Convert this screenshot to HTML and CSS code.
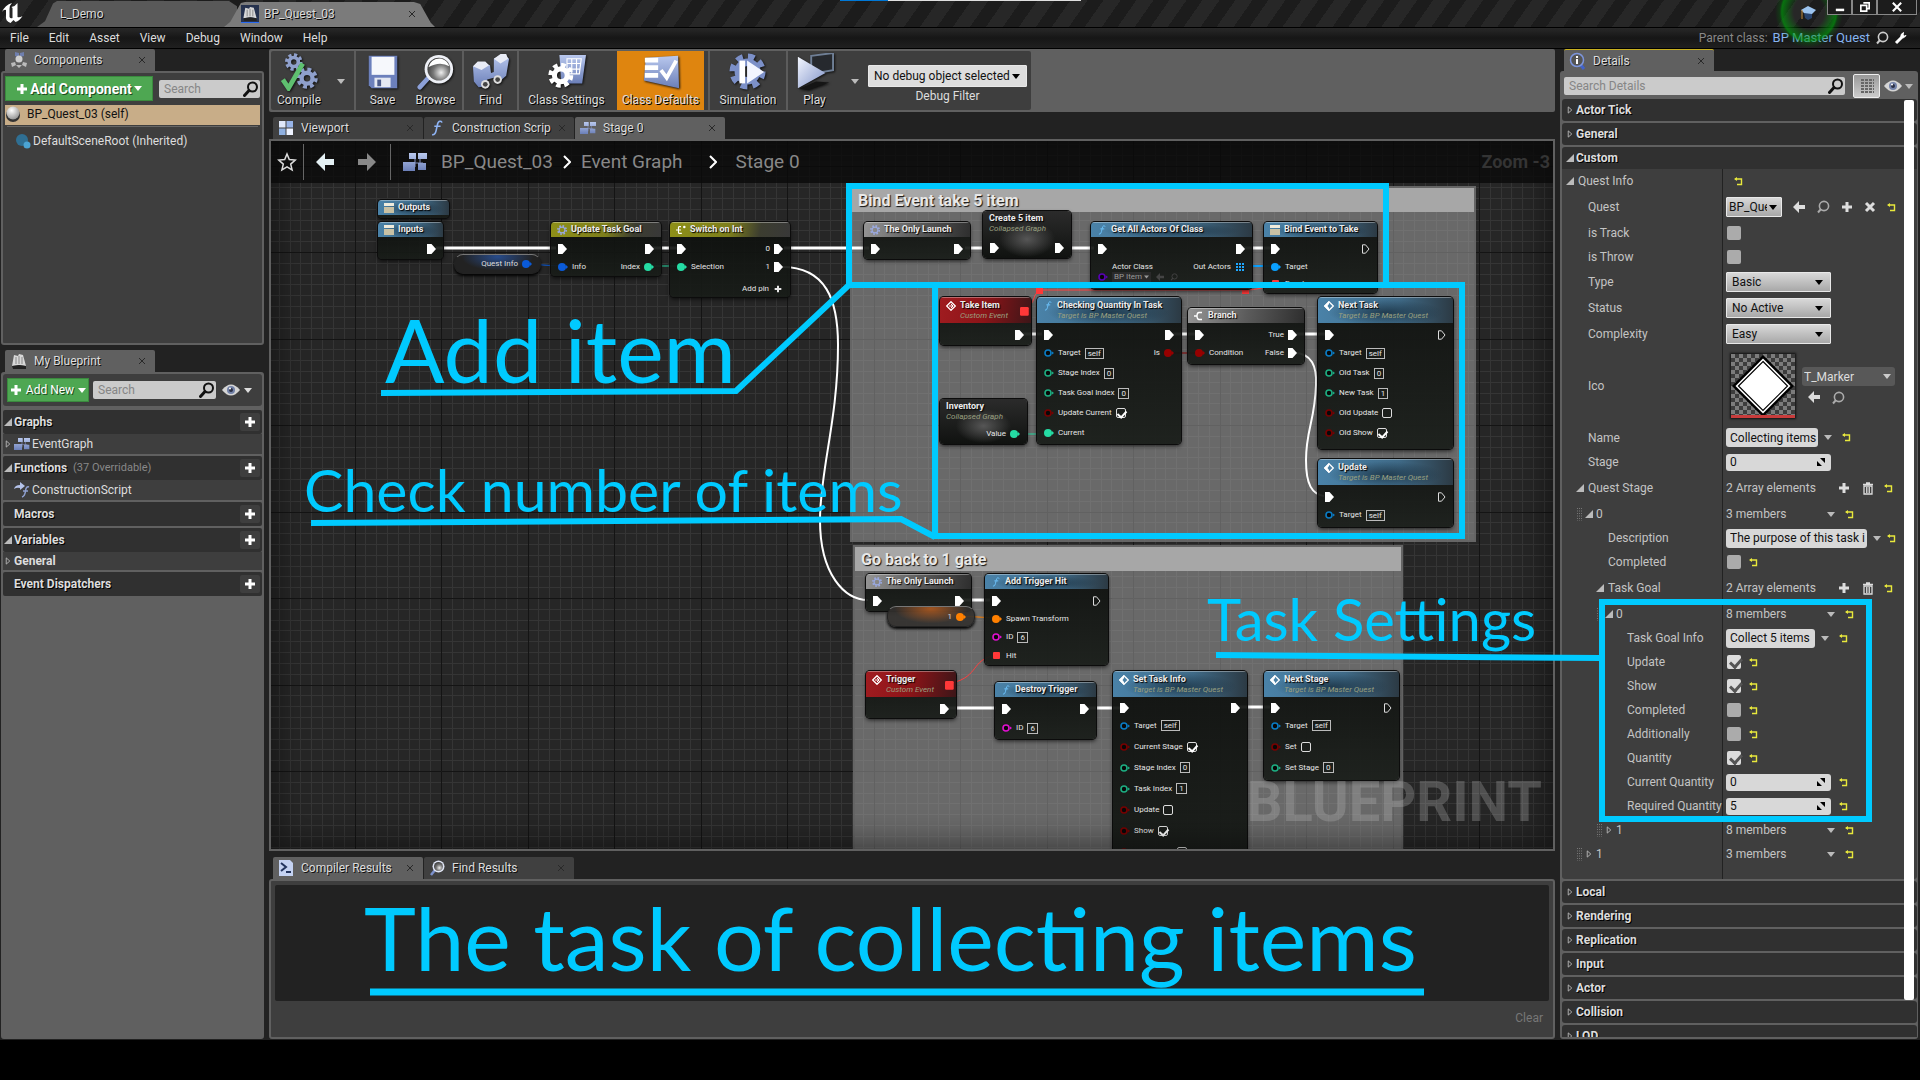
FILE: index.html
```html
<!DOCTYPE html>
<html lang="en">
<head>
<meta charset="utf-8">
<title>BP_Quest_03</title>
<link rel="stylesheet" href="styles.css">
</head>
<body>
<svg class="sprite" aria-hidden="true">
  <defs>
    <linearGradient id="steel" x1="0" y1="0" x2="1" y2="1"><stop offset="0" stop-color="#f4f7ff"/><stop offset="1" stop-color="#7f92c8"/></linearGradient>
    <linearGradient id="blueg" x1="0" y1="0" x2="0" y2="1"><stop offset="0" stop-color="#b9c8ee"/><stop offset="1" stop-color="#6b7fb8"/></linearGradient>
    <radialGradient id="lens" cx=".6" cy=".65" r=".7"><stop offset="0" stop-color="#eee"/><stop offset=".5" stop-color="#777"/><stop offset="1" stop-color="#333"/></radialGradient>
    <radialGradient id="ball" cx=".4" cy=".3" r=".8"><stop offset="0" stop-color="#fff"/><stop offset="1" stop-color="#888"/></radialGradient>
  </defs>
  <symbol id="i-search" viewBox="0 0 16 16"><circle cx="9.500" cy="6" r="4.500" fill="none" stroke="currentColor" stroke-width="2"/><path d="M6 9.500L1.500 14.500" stroke="currentColor" stroke-width="3" stroke-linecap="round"/></symbol>
  <symbol id="i-find" viewBox="0 0 14 14"><circle cx="8" cy="6" r="4.600" fill="none" stroke="currentColor" stroke-width="1.600"/><path d="M5 9L2 12.500" stroke="currentColor" stroke-width="2"/></symbol>
  <symbol id="i-plus" viewBox="0 0 12 12"><path d="M6 1v10M1 6h10" stroke="currentColor" stroke-width="3"/></symbol>
  <symbol id="i-x" viewBox="0 0 12 12"><path d="M2 2l8 8M10 2l-8 8" stroke="currentColor" stroke-width="3"/></symbol>
  <symbol id="i-close" viewBox="0 0 8 8"><path d="M1 1l6 6M7 1L1 7" stroke="currentColor" stroke-width="1"/></symbol>
  <symbol id="i-down" viewBox="0 0 8 5"><path d="M0 0h8L4 5z" fill="currentColor"/></symbol>
  <symbol id="i-back" viewBox="0 0 12 12"><path d="M0 6l6-6v4h6v4H6v4z" fill="currentColor"/></symbol>
  <symbol id="i-open" viewBox="0 0 8 8"><path d="M8 0v8H0z" fill="currentColor"/></symbol>
  <symbol id="i-shut" viewBox="0 0 6 9"><path d="M1 1v7L5 4.500z" fill="none" stroke="currentColor"/></symbol>
  <symbol id="i-reset" viewBox="0 0 9 9"><path d="M1 2h6.500v5.500H3" fill="none" stroke="#e8e83c" stroke-width="1.400"/><path d="M0 2l3-2v4z" fill="#e8e83c"/></symbol>
  <symbol id="i-trash" viewBox="0 0 12 13"><path d="M1 2.500h10M4 1h4" stroke="currentColor" stroke-width="1.500"/><path d="M2 4h8v8H2z" fill="none" stroke="currentColor" stroke-width="1.300"/><path d="M4.500 5v6M6 5v6M7.500 5v6" stroke="currentColor" stroke-width=".9"/></symbol>
  <symbol id="i-grip" viewBox="0 0 5 13"><path d="M.500 0v13M2.500 0v13M4.500 0v13" stroke="#777" stroke-dasharray="1 1.500"/></symbol>
  <symbol id="i-eye" viewBox="0 0 18 12"><path d="M0 6Q9-5 18 6Q9 17 0 6z" fill="#d5d5d5"/><circle cx="9" cy="6" r="4" fill="#7382a8"/><circle cx="9" cy="6" r="2" fill="#2b3045"/><circle cx="8" cy="4.500" r="1" fill="#fff"/></symbol>
  <symbol id="i-book" viewBox="0 0 18 18"><path d="M2 14L4 3l4 1 1-2 4 1 3 11-6-1z" fill="#d8d8d8"/><path d="M6 5v7M9 4v8M12 5v7" stroke="#888"/><path d="M2 14l7-1 7 1v3H3z" fill="#222"/></symbol>
  <symbol id="i-comp" viewBox="0 0 18 18"><path d="M5 1l4 1v4l-4-1zM10 2l4-1v4l-4 1z" fill="#6f7fae"/><circle cx="9" cy="8" r="3.500" fill="#cfcfcf"/><path d="M1 12l4-1 1 3-4 2zM17 12l-4-1-1 3 4 2zM6 14h6l-3 3z" fill="#bbb"/></symbol>
  <symbol id="i-nodes" viewBox="0 0 24 22"><path d="M12 4v12M8 12h12M17 8v6" stroke="#8390c0"/><g fill="url(#blueg)"><path d="M6 2h7v6H6zM15 2h9v6h-9zM0 11h12v9H0zM15 12h8v7h-8z"/></g></symbol>
  <symbol id="i-view" viewBox="0 0 16 16"><path d="M1 1h6.500v6.500H1z" fill="#dfe8fa"/><path d="M8.500 1H15v6.500H8.500z" fill="#98b4e8"/><path d="M1 8.500h6.500V15H1z" fill="#8fb0e0"/><path d="M8.500 8.500H15V15H8.500z" fill="#eef3ff"/></symbol>
  <symbol id="i-f" viewBox="0 0 14 18"><path d="M12.500 3Q12 1 10 1.500Q8 2 7.300 6L6 12Q5 17 1.500 16.500M4 7h7" fill="none" stroke="currentColor" stroke-width="1.800"/></symbol>
  <symbol id="i-gear" viewBox="0 0 20 20"><circle cx="10" cy="10" r="7.500" fill="none" stroke="currentColor" stroke-width="4.500" stroke-dasharray="3.300 2.590"/><circle cx="10" cy="10" r="5" fill="none" stroke="currentColor" stroke-width="4"/></symbol>
  <symbol id="i-macro" viewBox="0 0 12 12"><circle cx="6" cy="6" r="3.500" fill="none" stroke="#9aa9e0" stroke-width="1.400"/><circle cx="6" cy="6" r="5" fill="none" stroke="#9aa9e0" stroke-width="2" stroke-dasharray="2 1.927"/></symbol>
  <symbol id="i-card" viewBox="0 0 10 10"><path d="M0 0h10v3H0z" fill="#efebdc"/><path d="M0 4h10v6H0z" fill="#c9c1a4"/></symbol>
  <symbol id="i-event" viewBox="0 0 10 10"><path d="M5 .700L9.300 5 5 9.300.700 5z" fill="none" stroke="#fff" stroke-width="1.300"/><path d="M5 0L0 5l5 5V7L3.500 5 5 3z" fill="#fff"/></symbol>
  <symbol id="i-ediamond" viewBox="0 0 10 10"><path d="M5 .700L9.300 5 5 9.300.700 5z" fill="none" stroke="#fff" stroke-width="1.300"/><path d="M3 5h4M5 3l2 2-2 2" fill="none" stroke="#fff"/></symbol>
  <symbol id="i-switch" viewBox="0 0 12 10"><path d="M0 5h6M3 1v8M3 1h3M3 9h4" fill="none" stroke="#fff" stroke-width="1.400"/><circle cx="10" cy="1.500" r="1.500" fill="#fff"/></symbol>
  <symbol id="i-branch" viewBox="0 0 10 10"><path d="M0 5h3M8 1.500H5Q3 1.500 3 5Q3 8.500 5 8.500H8" fill="none" stroke="#fff" stroke-width="1.300"/></symbol>
  <symbol id="p-exec" viewBox="0 0 9 10"><path d="M0 0h4.500L9 5 4.500 10H0z" fill="#fff"/></symbol>
  <symbol id="p-open" viewBox="0 0 9 10"><path d="M1.500 .800h3L8 5 4.500 9.200h-3z" fill="none" stroke="#ddd"/></symbol>
  <symbol id="p-ring" viewBox="0 0 10 8"><circle cx="4" cy="4" r="3" fill="#080808" stroke="currentColor" stroke-width="1.600"/><path d="M8 2.500L10 4 8 5.500z" fill="currentColor"/></symbol>
  <symbol id="p-dot" viewBox="0 0 10 8"><circle cx="4" cy="4" r="4" fill="currentColor"/><path d="M8 2L10 4 8 6z" fill="currentColor"/></symbol>
  <symbol id="p-sq" viewBox="0 0 8 8"><rect width="7" height="7" rx="1" fill="#ff3838"/></symbol>
  <symbol id="p-arr" viewBox="0 0 8 8"><path d="M0 1h8M0 4h8M0 7h8" stroke="#1fa8ff" stroke-width="2" stroke-dasharray="2 1"/></symbol>
</svg>

<div class="app">
  <header class="titlebar">
    <svg class="ue" viewBox="0 0 24 24" aria-label="Unreal"><path d="M1 11Q4 4 11 2Q8 5 8.500 8v8q1 2 3 1V7l-1-1q4-1 6-4v3 11q2 1 5-1-3 5-7 6l-2-2-3 3Q4 20 5 15V9Q3 8 1 11z" fill="#fff"/></svg>
    <div class="wintab wintab-a"><span>L_Demo</span></div>
    <div class="wintab wintab-b"><svg class="ic18"><use href="#i-book"/></svg><span>BP_Quest_03</span><svg class="close"><use href="#i-close"/></svg></div>
    <div class="progress"></div>
    <div class="tutorial"><svg viewBox="0 0 16 16"><path d="M8 1l8 4-4 4H5L1 5z" fill="#9cc4f0"/><path d="M4 8l8 1v4l-4 2-3-2z" fill="#27436e"/><path d="M2 5v9" stroke="#c08a3c"/></svg></div>
    <div class="winbtns">
      <button aria-label="Minimize"><svg viewBox="0 0 12 12"><path d="M1 8h10v3H1z" fill="#fff"/></svg></button><button aria-label="Restore"><svg viewBox="0 0 12 12"><path d="M4 1h7v7H8M1 4h7v7H1z" fill="none" stroke="#fff" stroke-width="2"/></svg></button><button class="wide" aria-label="Close"><svg viewBox="0 0 12 12"><path d="M1 1l10 10M11 1L1 11" stroke="#fff" stroke-width="2.500"/></svg></button>
    </div>
  </header>
  <nav class="menubar">
    <button>File</button><button>Edit</button><button>Asset</button><button>View</button><button>Debug</button><button>Window</button><button>Help</button>
    <div class="parent"><span>Parent class:</span><a href="#parent">BP Master Quest</a><svg class="ic14"><use href="#i-find"/></svg><svg class="ic14" viewBox="0 0 14 14"><path d="M2 12L8 6" stroke="#fff" stroke-width="3"/><path d="M12 4.500Q10 8 7 6.500Q6 3 9.500 1.500L9 4l1.500 1z" fill="#fff" stroke="#fff"/></svg></div>
  </nav>

  <main class="work">
    <aside class="left">
      <section class="dock components">
        <div class="tabs"><div class="tab on"><svg class="ic18"><use href="#i-comp"/></svg><span>Components</span><svg class="close"><use href="#i-close"/></svg></div></div>
        <div class="panel comp-panel">
          <div class="comp-tools">
            <button class="green big"><svg class="ic12"><use href="#i-plus"/></svg>Add Component<svg class="dn"><use href="#i-down"/></svg></button>
            <div class="search"><input type="text" placeholder="Search" aria-label="Search components"><svg><use href="#i-search"/></svg></div>
          </div>
          <div class="comp-row sel"><svg class="ic16" viewBox="0 0 16 16"><circle cx="8" cy="9" r="7" fill="#333"/><circle cx="8" cy="7" r="6.500" fill="url(#ball)"/></svg><span>BP_Quest_03 (self)</span></div>
          <hr>
          <div class="comp-row sub"><svg class="ic16" viewBox="0 0 16 16"><circle cx="7" cy="7" r="6" fill="#2f6f93"/><circle cx="12" cy="12" r="3.500" fill="#4ba4d4"/></svg><span>DefaultSceneRoot (Inherited)</span></div>
        </div>
      </section>
      <section class="dock blueprint">
        <div class="tabs"><div class="tab on"><svg class="ic18"><use href="#i-book"/></svg><span>My Blueprint</span><svg class="close"><use href="#i-close"/></svg></div></div>
        <div class="panel bp-panel">
          <div class="bp-tools">
            <button class="green"><svg class="ic12"><use href="#i-plus"/></svg>Add New<svg class="dn"><use href="#i-down"/></svg></button>
            <div class="search"><input type="text" placeholder="Search" aria-label="Search blueprint"><svg><use href="#i-search"/></svg></div>
            <svg class="eye"><use href="#i-eye"/></svg><svg class="dn"><use href="#i-down"/></svg>
          </div>
          <div class="sec"><svg class="tri"><use href="#i-open"/></svg><b>Graphs</b><button aria-label="Add graph"><svg class="ic12"><use href="#i-plus"/></svg></button></div>
          <div class="item"><svg class="tri"><use href="#i-shut"/></svg><svg class="ic16"><use href="#i-nodes"/></svg><span>EventGraph</span></div>
          <div class="sec"><svg class="tri"><use href="#i-open"/></svg><b>Functions</b><i>(37 Overridable)</i><button aria-label="Add function"><svg class="ic12"><use href="#i-plus"/></svg></button></div>
          <div class="item"><span class="tri"></span><svg class="ic16" viewBox="0 0 16 16"><path d="M0 7Q1 3 6 3V0l5 4-5 4V6Q3 5 0 7z" fill="#b5c3ea"/><path d="M15 5Q12 4 11.500 9T8 15M9 9h5" fill="none" stroke="#8fa0d0" stroke-width="1.500"/></svg><span>ConstructionScript</span></div>
          <div class="sec"><span class="tri"></span><b>Macros</b><button aria-label="Add macro"><svg class="ic12"><use href="#i-plus"/></svg></button></div>
          <div class="sec"><svg class="tri"><use href="#i-open"/></svg><b>Variables</b><button aria-label="Add variable"><svg class="ic12"><use href="#i-plus"/></svg></button></div>
          <div class="item low"><svg class="tri"><use href="#i-shut"/></svg><b>General</b></div>
          <div class="sec"><span class="tri"></span><b>Event Dispatchers</b><button aria-label="Add dispatcher"><svg class="ic12"><use href="#i-plus"/></svg></button></div>
        </div>
      </section>
    </aside>

    <section class="center">
      <div class="toolbar">
        <div class="tools">
          <button class="tool t-compile"><svg viewBox="0 0 40 40"><g color="#8fa0cc"><use href="#i-gear" x="5" y="0" width="19" height="19"/><use href="#i-gear" x="17" y="15" width="23" height="23"/></g><path d="M3 28l6 9 15-26" fill="none" stroke="#5fc070" stroke-width="5"/></svg>Compile</button>
          <svg class="dd"><use href="#i-down"/></svg>
          <button class="tool sep t-save"><svg viewBox="0 0 40 40"><path d="M5 3h30v34H8l-3-3z" fill="#6c80bc"/><path d="M8 4h24v19H8z" fill="#f6f8fc"/><path d="M11 26h17v10H11z" fill="#e4e8f2"/><path d="M14 28h4v7h-4z" fill="#4d5c8c"/></svg>Save</button>
          <button class="tool t-browse"><svg viewBox="0 0 40 40"><path d="M13 25L3 36" stroke="#8ca0d8" stroke-width="5" stroke-linecap="round"/><circle cx="23" cy="17" r="15" fill="#eef0f6"/><circle cx="23" cy="17" r="12" fill="url(#lens)"/><path d="M12 15Q15 5 26 6Q32 8 34 14Q24 8 12 15z" fill="#fff"/></svg>Browse</button>
          <button class="tool sep t-find"><svg viewBox="0 0 40 40"><path d="M1 14l10-4 8 3 1 8 3-1V6l10-5 6 5-3 18-7 6-6-4-7 2-1 7-8 1-5-6z" fill="url(#blueg)"/><path d="M1 14l5-5 8 0 4 4-8 5zM23 6l7-5h6l2 5-8 5z" fill="#e9ecf6"/><circle cx="14" cy="33" r="4.500" fill="#ddd"/><circle cx="27" cy="28" r="4.500" fill="#ddd"/><circle cx="14" cy="33" r="2.500" fill="#444"/><circle cx="27" cy="28" r="2.500" fill="#444"/></svg>Find</button>
          <button class="tool sep t-set"><svg viewBox="0 0 40 40"><path d="M12 2h28l-4 30H14z" fill="url(#blueg)"/><path d="M20 6h15l-2 16H20zM25 6v16M30 6v16M20 11h14M20 17h14" fill="none" stroke="#fff" stroke-width="1.200"/><g color="#fff"><use href="#i-gear" x="0" y="10" width="27" height="27"/></g></svg>Class Settings</button>
          <button class="tool t-def"><svg viewBox="0 0 40 40"><path d="M4 5L38 3l1 34L2 29z" fill="url(#blueg)"/><path d="M3 5h14v5H3zM3 13h14v5H3zM3 21h14v5H3z" fill="#fff"/><path d="M20 18l6 8L36 8" fill="none" stroke="#fff" stroke-width="4"/></svg>Class Defaults</button>
          <button class="tool sep t-sim"><svg viewBox="0 0 40 40"><g color="#7c90c8"><use href="#i-gear" x="0" y="0" width="39" height="39"/></g><path d="M11 8h6v24h-6z" fill="#fff"/><path d="M19 8l18 12-18 12z" fill="#f2f5ff"/></svg>Simulation</button>
          <button class="tool sep t-play"><svg viewBox="0 0 40 40"><path d="M16 3l23-3v18l-23 4z" fill="#26292e" stroke="#6f7f96" stroke-width="2"/><path d="M3 38l18-8 14 1-22 8z" fill="#151515"/><path d="M2 4l29 17L2 37z" fill="url(#steel)"/></svg>Play</button>
          <svg class="dd"><use href="#i-down"/></svg>
          <div class="debug"><select id="dbg"><option>No debug object selected</option></select><label for="dbg">Debug Filter</label></div>
        </div>
      </div>

      <div class="tabs graph-tabs">
        <div class="tab"><svg class="ic16"><use href="#i-view"/></svg><span>Viewport</span><svg class="close"><use href="#i-close"/></svg></div>
        <div class="tab"><svg class="ic16 fblue"><use href="#i-f"/></svg><span>Construction Scrip</span><svg class="close"><use href="#i-close"/></svg></div>
        <div class="tab on"><svg class="ic16"><use href="#i-nodes"/></svg><span>Stage 0</span><svg class="close"><use href="#i-close"/></svg></div>
      </div>

      <div class="graph">
        <div class="world">
          <svg class="layer" aria-hidden="true">
            <defs><pattern id="grid" x="441" y="252" width="173" height="173" patternUnits="userSpaceOnUse">
              <path d="M11 0v173M22 0v173M32 0v173M43 0v173M54 0v173M65 0v173M76 0v173M97 0v173M108 0v173M119 0v173M130 0v173M141 0v173M151 0v173M162 0v173M0 11h173M0 22h173M0 32h173M0 43h173M0 54h173M0 65h173M0 76h173M0 97h173M0 108h173M0 119h173M0 130h173M0 141h173M0 151h173M0 162h173" transform="translate(.500 .500)" stroke="#353535"/>
              <path d="M0 0v173M87 0v173M0 0h173M0 87h173" transform="translate(.500 .500)" stroke="#141414"/></pattern></defs>
            <rect width="1920" height="1080" fill="url(#grid)"/>
          </svg>
          <div class="comment c1"><h3>Bind Event take 5 item</h3></div>
          <div class="comment c2"><h3>Go back to 1 gate</h3></div>
          <svg class="layer" aria-hidden="true" fill="none">
            <g stroke="#fff" stroke-width="3">
              <path d="M436 248H556M652 248h26M784 248h85M965 248h25M1060 248h34M1240 248h32M1022 334h20M1170 334h26M1294 334h32M960 600h30M946 708h50M1080 708h40M1236 707h34"/>
              <path stroke-width="2" d="M782 267C826 267 838 300 838 345C838 420 820 470 820 520C820 575 845 600 868 600"/>
              <path stroke-width="2" d="M1294 353C1312 353 1317 367 1316 385C1315 420 1306 430 1306 460C1306 485 1312 494 1324 496"/>
            </g>
            <path d="M526 264L560 266" stroke="#0a5ad8"/><path d="M648 266h34M1014 434h30" stroke="#25dca4"/><path d="M1168 353h32" stroke="#8c0000"/><path d="M1244 266h30" stroke="#0aa0ff" stroke-width="2"/><path d="M960 616l36 2" stroke="#ff8000"/>
            <path d="M1024 309Q1032 306 1034 298Q1036 291 1042 290H1245Q1262 290 1275 283M952 683C980 676 970 660 996 655" stroke="#ff4040"/>
            <path d="M1036 287h7v7h-7zM1242 287h7v7h-7z" fill="#ff3838"/>
          </svg>

          <article class="node blue n-out"><h4><svg><use href="#i-card"/></svg>Outputs</h4></article>
          <article class="node blue n-in"><h4><svg><use href="#i-card"/></svg>Inputs</h4><div class="row ex"><span></span><span><svg class="e"><use href="#p-exec"/></svg></span></div></article>
          <article class="pill n-qi"><span>Quest Info<svg class="d cblue"><use href="#p-dot"/></svg></span></article>
          <article class="node yellow n-utg"><h4><svg><use href="#i-macro"/></svg>Update Task Goal</h4><div class="row ex"><span><svg class="e"><use href="#p-exec"/></svg></span><span><svg class="e"><use href="#p-exec"/></svg></span></div><div class="row s"><span><svg class="d cblue"><use href="#p-dot"/></svg>Info</span><span>Index<svg class="d cgreen"><use href="#p-dot"/></svg></span></div></article>
          <article class="node yellow n-sw"><h4><svg><use href="#i-switch"/></svg>Switch on Int</h4><div class="row ex"><span><svg class="e"><use href="#p-exec"/></svg></span><span>0<svg class="e"><use href="#p-exec"/></svg></span></div><div class="row s"><span><svg class="d cgreen"><use href="#p-dot"/></svg>Selection</span><span>1<svg class="e"><use href="#p-exec"/></svg></span></div><div class="row last"><span></span><span>Add pin<svg class="d"><use href="#i-plus"/></svg></span></div></article>

          <article class="node gray n-ol1"><h4><svg><use href="#i-macro"/></svg>The Only Launch</h4><div class="row ex"><span><svg class="e"><use href="#p-exec"/></svg></span><span><svg class="e"><use href="#p-exec"/></svg></span></div></article>
          <article class="node collapsed n-c5"><h4>Create 5 item<em>Collapsed Graph</em></h4><div class="row ex"><span><svg class="e"><use href="#p-exec"/></svg></span><span><svg class="e"><use href="#p-exec"/></svg></span></div></article>
          <article class="node blue n-gaa"><h4><svg class="fb"><use href="#i-f"/></svg>Get All Actors Of Class</h4><div class="row ex"><span><svg class="e"><use href="#p-exec"/></svg></span><span><svg class="e"><use href="#p-exec"/></svg></span></div><div class="row s"><span class="shift">Actor Class</span><span>Out Actors<svg class="d"><use href="#p-arr"/></svg></span></div><div class="row mini"><span><svg class="d cpurple"><use href="#p-ring"/></svg><span class="tag">BP Item <svg class="sd"><use href="#i-down"/></svg></span><svg class="d dim"><use href="#i-back"/></svg><svg class="d dim"><use href="#i-find"/></svg></span></div></article>
          <article class="node blue n-bind"><h4><svg><use href="#i-card"/></svg>Bind Event to Take</h4><div class="row ex"><span><svg class="e"><use href="#p-exec"/></svg></span><span><svg class="e"><use href="#p-open"/></svg></span></div><div class="row s"><span><svg class="d csky"><use href="#p-dot"/></svg>Target</span></div><div class="row s"><span><svg class="d"><use href="#p-sq"/></svg>Event</span></div></article>

          <article class="node red two n-take"><h4><svg><use href="#i-ediamond"/></svg>Take Item<em>Custom Event</em><svg class="del"><use href="#p-sq"/></svg></h4><div class="row ex"><span></span><span><svg class="e"><use href="#p-exec"/></svg></span></div></article>
          <article class="node blue two n-chk"><h4><svg class="fb"><use href="#i-f"/></svg>Checking Quantity In Task<em>Target is BP Master Quest</em></h4><div class="row ex"><span><svg class="e"><use href="#p-exec"/></svg></span><span><svg class="e"><use href="#p-exec"/></svg></span></div><div class="row"><span><svg class="d cring"><use href="#p-ring"/></svg>Target <kbd>self</kbd></span><span>Is<svg class="d cred"><use href="#p-dot"/></svg></span></div><div class="row"><span><svg class="d cgreen2"><use href="#p-ring"/></svg>Stage Index <kbd>0</kbd></span></div><div class="row"><span><svg class="d cgreen2"><use href="#p-ring"/></svg>Task Goal Index <kbd>0</kbd></span></div><div class="row"><label><svg class="d cred2"><use href="#p-ring"/></svg>Update Current <input type="checkbox" checked></label></div><div class="row"><span><svg class="d cgreen"><use href="#p-dot"/></svg>Current</span></div></article>
          <article class="node gray n-br"><h4><svg><use href="#i-branch"/></svg>Branch</h4><div class="row ex"><span><svg class="e"><use href="#p-exec"/></svg></span><span>True<svg class="e"><use href="#p-exec"/></svg></span></div><div class="row s"><span><svg class="d cred"><use href="#p-dot"/></svg>Condition</span><span>False<svg class="e"><use href="#p-exec"/></svg></span></div></article>
          <article class="node collapsed n-inv"><h4>Inventory<em>Collapsed Graph</em></h4><div class="row s"><span></span><span>Value<svg class="d cgreen"><use href="#p-dot"/></svg></span></div></article>
          <article class="node blue two n-next"><h4><svg><use href="#i-event"/></svg>Next Task<em>Target is BP Master Quest</em></h4><div class="row ex"><span><svg class="e"><use href="#p-exec"/></svg></span><span><svg class="e"><use href="#p-open"/></svg></span></div><div class="row"><span><svg class="d cring"><use href="#p-ring"/></svg>Target <kbd>self</kbd></span></div><div class="row"><span><svg class="d cgreen2"><use href="#p-ring"/></svg>Old Task <kbd>0</kbd></span></div><div class="row"><span><svg class="d cgreen2"><use href="#p-ring"/></svg>New Task <kbd>1</kbd></span></div><div class="row"><label><svg class="d cred2"><use href="#p-ring"/></svg>Old Update <input type="checkbox"></label></div><div class="row"><label><svg class="d cred2"><use href="#p-ring"/></svg>Old Show <input type="checkbox" checked></label></div></article>
          <article class="node blue two n-upd"><h4><svg><use href="#i-event"/></svg>Update<em>Target is BP Master Quest</em></h4><div class="row ex"><span><svg class="e"><use href="#p-exec"/></svg></span><span><svg class="e"><use href="#p-open"/></svg></span></div><div class="row"><span><svg class="d cring"><use href="#p-ring"/></svg>Target <kbd>self</kbd></span></div></article>

          <article class="node gray n-ol2"><h4><svg><use href="#i-macro"/></svg>The Only Launch</h4><div class="row ex"><span><svg class="e"><use href="#p-exec"/></svg></span><span><svg class="e"><use href="#p-exec"/></svg></span></div></article>
          <article class="pill orange n-one"><span>1<svg class="d corange"><use href="#p-dot"/></svg></span></article>
          <article class="node blue n-ath"><h4><svg class="fb"><use href="#i-f"/></svg>Add Trigger Hit</h4><div class="row ex"><span><svg class="e"><use href="#p-exec"/></svg></span><span><svg class="e"><use href="#p-open"/></svg></span></div><div class="row s"><span><svg class="d corange"><use href="#p-dot"/></svg>Spawn Transform</span></div><div class="row"><span><svg class="d cpink"><use href="#p-ring"/></svg>ID <kbd>6</kbd></span></div><div class="row s"><span><svg class="d"><use href="#p-sq"/></svg>Hit</span></div></article>
          <article class="node red two n-trg"><h4><svg><use href="#i-ediamond"/></svg>Trigger<em>Custom Event</em><svg class="del"><use href="#p-sq"/></svg></h4><div class="row ex"><span></span><span><svg class="e"><use href="#p-exec"/></svg></span></div></article>
          <article class="node blue n-des"><h4><svg class="fb"><use href="#i-f"/></svg>Destroy Trigger</h4><div class="row ex"><span><svg class="e"><use href="#p-exec"/></svg></span><span><svg class="e"><use href="#p-exec"/></svg></span></div><div class="row"><span><svg class="d cpink"><use href="#p-ring"/></svg>ID <kbd>6</kbd></span></div></article>
          <article class="node blue two tall n-sti"><h4><svg><use href="#i-event"/></svg>Set Task Info<em>Target is BP Master Quest</em></h4><div class="row ex"><span><svg class="e"><use href="#p-exec"/></svg></span><span><svg class="e"><use href="#p-exec"/></svg></span></div><div class="row"><span><svg class="d cring"><use href="#p-ring"/></svg>Target <kbd>self</kbd></span></div><div class="row"><label><svg class="d cred2"><use href="#p-ring"/></svg>Current Stage <input type="checkbox" checked></label></div><div class="row"><span><svg class="d cgreen2"><use href="#p-ring"/></svg>Stage Index <kbd>0</kbd></span></div><div class="row"><span><svg class="d cgreen2"><use href="#p-ring"/></svg>Task Index <kbd>1</kbd></span></div><div class="row"><label><svg class="d cred2"><use href="#p-ring"/></svg>Update <input type="checkbox"></label></div><div class="row"><label><svg class="d cred2"><use href="#p-ring"/></svg>Show <input type="checkbox" checked></label></div><div class="row"><label><svg class="d cred2"><use href="#p-ring"/></svg>Completed <input type="checkbox"></label></div></article>
          <article class="node blue two tall n-ns"><h4><svg><use href="#i-event"/></svg>Next Stage<em>Target is BP Master Quest</em></h4><div class="row ex"><span><svg class="e"><use href="#p-exec"/></svg></span><span><svg class="e"><use href="#p-open"/></svg></span></div><div class="row"><span><svg class="d cring"><use href="#p-ring"/></svg>Target <kbd>self</kbd></span></div><div class="row"><label><svg class="d cred2"><use href="#p-ring"/></svg>Set <input type="checkbox"></label></div><div class="row"><span><svg class="d cgreen2"><use href="#p-ring"/></svg>Set Stage <kbd>0</kbd></span></div></article>
        </div>
        <div class="vignette"></div>
        <div class="crumbs">
          <svg class="star" viewBox="0 0 20 20"><path d="M10 2l2.300 5.600 6 .500-4.600 4 1.400 5.900-5.100-3.200L4.900 18l1.400-5.900-4.600-4 6-.500z" fill="none" stroke="#ddd" stroke-width="1.500"/></svg>
          <span class="bar"></span>
          <svg class="nav"><use href="#i-back"/></svg><svg class="nav fwd"><use href="#i-back"/></svg>
          <span class="bar b2"></span>
          <svg class="gi"><use href="#i-nodes"/></svg>
          <span>BP_Quest_03</span><svg class="chev" viewBox="0 0 8 14"><path d="M1 1l6 6-6 6" fill="none" stroke="#fff" stroke-width="2"/></svg><span>Event Graph</span><svg class="chev far" viewBox="0 0 8 14"><path d="M1 1l6 6-6 6" fill="none" stroke="#fff" stroke-width="2"/></svg><span>Stage 0</span>
          <b class="zoom">Zoom -3</b>
        </div>
        <div class="mark">BLUEPRINT</div>
      </div>

      <div class="tabs out-tabs">
        <div class="tab on"><svg class="ic16" viewBox="0 0 16 16"><path d="M1 0h11l3 3v13H1z" fill="#c4d2f2"/><path d="M3 3l5 4-5 4M8 12h5" fill="none" stroke="#22345e" stroke-width="2"/></svg><span>Compiler Results</span><svg class="close"><use href="#i-close"/></svg></div>
        <div class="tab"><svg class="ic16" viewBox="0 0 16 16"><path d="M6 10l-4 5" stroke="#7b90cc" stroke-width="2.500"/><circle cx="9.500" cy="6.500" r="6" fill="#dfe4f4"/><circle cx="9.500" cy="6.500" r="4.500" fill="url(#lens)"/></svg><span>Find Results</span><svg class="close"><use href="#i-close"/></svg></div>
      </div>
      <div class="panel output"><div class="log"></div><div class="foot"><button>Clear</button></div></div>
    </section>

    <aside class="right">
      <div class="tabs"><div class="tab on active"><svg class="ic18" viewBox="0 0 18 18"><path d="M11 12l4 5" stroke="#4262c8" stroke-width="3"/><circle cx="8" cy="8" r="6.500" fill="#555" stroke="#7c95dc" stroke-width="1.500"/><path d="M8 7v5M8 4v2" stroke="#fff" stroke-width="2"/></svg><span>Details</span><svg class="close"><use href="#i-close"/></svg></div></div>
      <div class="details">
        <div class="dt-tools"><div class="search"><input type="text" placeholder="Search Details" aria-label="Search details"><svg><use href="#i-search"/></svg></div><button class="matrix" aria-label="Property matrix"><svg viewBox="0 0 14 14"><path d="M1 1h13M1 4h13M1 7h13M1 10h13M1 13h13" stroke="#666" stroke-width="2" stroke-dasharray="3 1"/></svg></button><svg class="eye"><use href="#i-eye"/></svg><svg class="dn"><use href="#i-down"/></svg></div>
        <div class="list">
          <button class="cat"><svg class="tri"><use href="#i-shut"/></svg>Actor Tick</button>
          <button class="cat"><svg class="tri"><use href="#i-shut"/></svg>General</button>
          <button class="cat open"><svg class="tri"><use href="#i-open"/></svg>Custom</button>
          <div class="props">
            <div class="pr"><div class="k k0"><svg class="tri"><use href="#i-open"/></svg>Quest Info</div><div class="v in8"><svg class="rs"><use href="#i-reset"/></svg></div></div>
            <div class="pr h28"><label class="k k1" for="q">Quest</label><div class="v"><select id="q" class="cut"><option>BP_Quest_03</option></select><span class="acts"><svg class="ic12"><use href="#i-back"/></svg><svg class="ic14 mut"><use href="#i-find"/></svg><svg class="ic12"><use href="#i-plus"/></svg><svg class="ic12"><use href="#i-x"/></svg><svg class="rs"><use href="#i-reset"/></svg></span></div></div>
            <div class="pr"><label class="k k1" for="c1">is Track</label><div class="v"><input id="c1" type="checkbox"></div></div>
            <div class="pr"><label class="k k1" for="c2">is Throw</label><div class="v"><input id="c2" type="checkbox"></div></div>
            <div class="pr h26"><label class="k k1" for="s1">Type</label><div class="v"><select id="s1"><option>Basic</option></select></div></div>
            <div class="pr h26"><label class="k k1" for="s2">Status</label><div class="v"><select id="s2"><option>No Active</option></select></div></div>
            <div class="pr h26"><label class="k k1" for="s3">Complexity</label><div class="v"><select id="s3"><option>Easy</option></select></div></div>
            <div class="pr h78"><label class="k k1" for="s4">Ico</label><div class="v"><svg class="thumb" viewBox="0 0 64 64"><defs><pattern id="chk" width="8" height="8" patternUnits="userSpaceOnUse"><path d="M0 0h8v8H0z" fill="#3c3c3c"/><path d="M0 0h4v4H0zM4 4h4v4H4z" fill="#7c7c7c"/></pattern></defs><path d="M0 0h64v64H0z" fill="url(#chk)"/><path d="M32 1L63 32 32 63 1 32z" fill="#000"/><path d="M32 4.500L59.500 32 32 59.500 4.500 32z" fill="#fff"/><path d="M32 7.500L56.500 32 32 56.500 7.500 32z" fill="none" stroke="#000" stroke-width="1.200"/><path d="M0 61h64v3H0z" fill="#c83c3c"/></svg><div class="asset"><select id="s4" class="dark"><option>T_Marker</option></select><span><svg class="ic12"><use href="#i-back"/></svg><svg class="ic14 mut"><use href="#i-find"/></svg></span></div></div></div>
            <div class="pr h25"><label class="k k1" for="t1">Name</label><div class="v"><input id="t1" class="w92" type="text" value="Collecting items"><svg class="dn"><use href="#i-down"/></svg><svg class="rs"><use href="#i-reset"/></svg></div></div>
            <div class="pr"><label class="k k1" for="t2">Stage</label><div class="v"><input id="t2" class="num" type="text" value="0"></div></div>
            <div class="pr h28"><div class="k k1a"><svg class="tri"><use href="#i-open"/></svg>Quest Stage</div><div class="v"><span class="arr">2 Array elements</span><svg class="ic12"><use href="#i-plus"/></svg><svg class="ic13"><use href="#i-trash"/></svg><svg class="rs"><use href="#i-reset"/></svg></div></div>
            <div class="pr"><div class="k k2g"><svg class="grip"><use href="#i-grip"/></svg><svg class="tri"><use href="#i-open"/></svg>0</div><div class="v"><span class="mem">3 members</span><svg class="dn"><use href="#i-down"/></svg><svg class="rs"><use href="#i-reset"/></svg></div></div>
            <div class="pr"><label class="k k3" for="t3">Description</label><div class="v"><input id="t3" class="w141" type="text" value="The purpose of this task i"><svg class="dn"><use href="#i-down"/></svg><svg class="rs"><use href="#i-reset"/></svg></div></div>
            <div class="pr"><label class="k k3" for="c3">Completed</label><div class="v"><input id="c3" type="checkbox"><svg class="rs"><use href="#i-reset"/></svg></div></div>
            <div class="pr h28"><div class="k k3a"><svg class="tri"><use href="#i-open"/></svg>Task Goal</div><div class="v"><span class="arr">2 Array elements</span><svg class="ic12"><use href="#i-plus"/></svg><svg class="ic13"><use href="#i-trash"/></svg><svg class="rs"><use href="#i-reset"/></svg></div></div>
            <div class="pr"><div class="k k4g"><svg class="grip"><use href="#i-grip"/></svg><svg class="tri"><use href="#i-open"/></svg>0</div><div class="v"><span class="mem">8 members</span><svg class="dn"><use href="#i-down"/></svg><svg class="rs"><use href="#i-reset"/></svg></div></div>
            <div class="pr"><label class="k k5" for="t4">Task Goal Info</label><div class="v"><input id="t4" class="w89" type="text" value="Collect 5 items"><svg class="dn"><use href="#i-down"/></svg><svg class="rs"><use href="#i-reset"/></svg></div></div>
            <div class="pr"><label class="k k5" for="c4">Update</label><div class="v"><input id="c4" type="checkbox" checked><svg class="rs"><use href="#i-reset"/></svg></div></div>
            <div class="pr"><label class="k k5" for="c5">Show</label><div class="v"><input id="c5" type="checkbox" checked><svg class="rs"><use href="#i-reset"/></svg></div></div>
            <div class="pr"><label class="k k5" for="c6">Completed</label><div class="v"><input id="c6" type="checkbox"><svg class="rs"><use href="#i-reset"/></svg></div></div>
            <div class="pr"><label class="k k5" for="c7">Additionally</label><div class="v"><input id="c7" type="checkbox"><svg class="rs"><use href="#i-reset"/></svg></div></div>
            <div class="pr"><label class="k k5" for="c8">Quantity</label><div class="v"><input id="c8" type="checkbox" checked><svg class="rs"><use href="#i-reset"/></svg></div></div>
            <div class="pr"><label class="k k5" for="t5">Current Quantity</label><div class="v"><input id="t5" class="num" type="text" value="0"><svg class="rs"><use href="#i-reset"/></svg></div></div>
            <div class="pr"><label class="k k5" for="t6">Required Quantity</label><div class="v"><input id="t6" class="num" type="text" value="5"><svg class="rs"><use href="#i-reset"/></svg></div></div>
            <div class="pr"><div class="k k4g"><svg class="grip"><use href="#i-grip"/></svg><svg class="tri"><use href="#i-shut"/></svg>1</div><div class="v"><span class="mem">8 members</span><svg class="dn"><use href="#i-down"/></svg><svg class="rs"><use href="#i-reset"/></svg></div></div>
            <div class="pr"><div class="k k2g"><svg class="grip"><use href="#i-grip"/></svg><svg class="tri"><use href="#i-shut"/></svg>1</div><div class="v"><span class="mem">3 members</span><svg class="dn"><use href="#i-down"/></svg><svg class="rs"><use href="#i-reset"/></svg></div></div>
          </div>
          <button class="cat"><svg class="tri"><use href="#i-shut"/></svg>Local</button>
          <button class="cat"><svg class="tri"><use href="#i-shut"/></svg>Rendering</button>
          <button class="cat"><svg class="tri"><use href="#i-shut"/></svg>Replication</button>
          <button class="cat"><svg class="tri"><use href="#i-shut"/></svg>Input</button>
          <button class="cat"><svg class="tri"><use href="#i-shut"/></svg>Actor</button>
          <button class="cat"><svg class="tri"><use href="#i-shut"/></svg>Collision</button>
          <button class="cat"><svg class="tri"><use href="#i-shut"/></svg>LOD</button>
          <div class="scroll"></div>
        </div>
      </div>
    </aside>
  </main>

  <svg class="notes">
    <g fill="none" stroke="#00caff" stroke-width="6">
      <path d="M849 186h537v99H849zM935 285h527v251H935zM1602 602h267v217h-267z"/>
      <path d="M381 393l355-2 113-106M311 523l590-4 34 18M1216 655l384 3"/>
      <path d="M370 992h1054" stroke-width="7"/>
    </g>
    <g class="hand">
      <text class="t-a" x="385" y="383">Add item</text>
      <text class="t-b" x="304" y="512">Check number of items</text>
      <text class="t-c" x="1207" y="641">Task Settings</text>
      <text class="t-d" x="364" y="971">The task of collecting items</text>
    </g>
  </svg>
</div>
</body>
</html>
```
FILE: styles.css
```css
* { box-sizing: border-box; }
body { margin: 0; background: #000; color: #ddd; font: 12px/16px Roboto, "Liberation Sans", sans-serif; }
button, input, select { font: inherit; color: inherit; margin: 0; padding: 0; border: 0; background: none; }
svg { flex: none; display: block; }
h3, h4 { margin: 0; }
.sprite { position: absolute; width: 0; height: 0; }
.app { position: relative; display: flex; flex-direction: column; height: calc(100vh - 40px); background: #222; overflow: hidden; }

/* Title bar */
.titlebar { position: relative; display: flex; flex: none; height: 28px; border-bottom: 1px solid #000; background: repeating-linear-gradient(125deg, #1c1c1c 0 13px, #272727 13px 27px); }
.ue { width: 24px; height: 24px; margin: 1px 12px 0 1px; }
.wintab { display: flex; align-items: center; height: 26px; margin-top: 1px; color: #d8d8d8; text-shadow: 1px 1px #000; }
.wintab-a { width: 200px; padding-left: 23px; background: #595959; clip-path: polygon(0 100%, 4% 78%, 8% 10%, 10% 0, 96% 0, 100% 20%, 100% 100%); }
.wintab-b { width: 211px; margin-left: -13px; padding: 0 19px 0 17px; gap: 5px; background: #7b7b7b; clip-path: polygon(0 100%, 3% 80%, 8% 8%, 10% 4%, 90% 4%, 93% 12%, 98% 84%, 100% 100%); }
.wintab-b .ic18 { background: #26324e; border-bottom: 1px solid #2a6af0; }
.progress { position: absolute; left: 840px; top: 0; width: 241px; height: 1px; background: linear-gradient(90deg, #0078d7 48px, #e0e0e0 48px); }
.tutorial { position: absolute; z-index: 2; right: 77px; top: -24px; width: 68px; height: 72px; border-radius: 50%; background: radial-gradient(closest-side, transparent 45%, rgba(0, 150, 10, .7) 80%, rgba(0, 120, 10, .3) 86%, transparent); }
.tutorial svg { width: 16px; height: 16px; margin: 29px 0 0 25px; }
.winbtns { position: relative; z-index: 3; display: flex; height: 15px; margin-left: auto; margin-right: 3px; }
.winbtns button { display: flex; align-items: center; justify-content: center; width: 25px; border: 1px solid #888; border-top: 0; background: #1c1c1c; }
.winbtns .wide { width: 40px; }
.winbtns svg { width: 10px; height: 10px; }
.close { width: 8px; height: 8px; margin-left: auto; color: #292929; }

/* Menu */
.menubar { display: flex; flex: none; align-items: center; height: 21px; padding-left: 10px; gap: 20px; border-bottom: 1px solid #000; background: linear-gradient(#282828, #161616 50%, #202020); }
.parent { display: flex; align-items: center; gap: 5px; margin-left: auto; margin-right: 12px; color: #888; }
.parent a { color: #86b4f0; font-size: 13px; text-decoration: none; }
.parent svg { color: #ccc; }

.ic12 { width: 12px; height: 12px; } .ic13 { width: 12px; height: 13px; } .ic14 { width: 14px; height: 14px; }
.ic16 { width: 16px; height: 16px; } .ic18 { width: 18px; height: 18px; }
.dn { width: 8px; height: 5px; } .tri { width: 8px; height: 8px; flex: none; color: #bbb; }
.eye { width: 18px; height: 12px; } .rs { width: 9px; height: 9px; } .fblue { color: #8fb4f4; }
.mut { color: #aaa; }

/* Docks */
.work { display: flex; flex: 1; min-height: 0; gap: 5px; padding: 0 2px 1px 1px; }
.left { display: flex; flex-direction: column; width: 263px; flex: none; gap: 5px; }
.center { display: flex; flex-direction: column; flex: 1; min-width: 0; }
.right { display: flex; flex-direction: column; width: 358px; flex: none; }
.tabs { display: flex; flex: none; height: 22px; padding-left: 4px; gap: 1px; }
.tab { display: flex; align-items: center; width: 150px; height: 22px; padding: 0 9px 0 5px; gap: 7px; border-radius: 2px 2px 0 0; background: #404040; color: #ddd; text-shadow: 1px 1px #111; white-space: nowrap; }
.left .tab, .right .tab { gap: 6px; }
.tab.on { background: #606060; }
.tab.active { border-top: 1px solid #c8b020; }
.panel { border: 2px solid #606060; border-radius: 3px; background: #3e3e3e; }
.dock { display: flex; flex-direction: column; }
.components { height: 296px; }
.blueprint { flex: 1; }
.comp-panel { flex: 1; padding: 3px 2px; }
.comp-tools { display: flex; align-items: center; gap: 6px; margin-bottom: 4px; }
.green { display: flex; align-items: center; justify-content: center; width: 82px; height: 24px; gap: 4px; background: #4ea752; border: 1px solid #3a8a3e; color: #fff; text-shadow: 1px 1px #1c4a1e; }
.green.big { width: 148px; height: 25px; font-size: 14px; font-weight: 700; gap: 2px; }
.search { display: flex; align-items: center; flex: 1; height: 18px; padding: 0 1px 0 5px; border-radius: 2px; background: #cbcbcb; }
.search input { flex: 1; width: 0; color: #222; outline: 0; }
.search input::placeholder { color: #868686; }
.search svg { width: 16px; height: 16px; color: #111; }
.comp-row { display: flex; align-items: center; height: 20px; gap: 6px; padding-bottom: 2px; }
.comp-row.sel { background: #c8ad88; color: #111; }
.comp-row.sub { gap: 2px; padding-left: 10px; margin-top: 5px; }
.comp-panel hr { margin: 1px 2px 0; border: 0; border-top: 1px solid #666; }
.bp-panel { flex: 1; background: #606060; padding: 0; }
.bp-tools { display: flex; align-items: center; height: 32px; margin-bottom: 4px; padding: 0 10px 0 4px; gap: 4px; background: #3e3e3e; border-radius: 3px; }
.bp-tools .search { margin-right: 2px; }
.sec { display: flex; align-items: center; height: 24px; margin-top: 2px; gap: 2px; padding: 0 2px 0 1px; background: #303030; border-radius: 2px; text-shadow: 1px 1px #000; }
.sec i { font-style: normal; font-size: 11px; color: #888; margin-left: 4px; text-shadow: none; }
.sec button { display: flex; align-items: center; justify-content: center; width: 20px; height: 18px; margin-left: auto; border-radius: 2px; background: #3e3e3e; color: #fff; }
.item { display: flex; align-items: center; height: 20px; gap: 2px; padding-left: 1px; background: #3e3e3e; }
.item.low { height: 18px; }

/* Toolbar */
.toolbar { display: flex; flex: none; height: 63px; margin-bottom: 5px; padding: 2px; border-radius: 2px; background: #606060; }
.tools { display: flex; align-items: center; height: 59px; padding-right: 4px; border-radius: 2px; background: #3e3e3e; }
.tool { display: flex; flex-direction: column; align-items: center; justify-content: space-between; height: 59px; padding: 2px 0 2px; text-shadow: 1px 1px #000; white-space: nowrap; }
.tool svg { width: 38px; height: 38px; filter: drop-shadow(1px 1px 1px #111); }
.sep { border-left: 2px solid #5c5c5c; }
.t-compile { width: 56px; } .t-save { width: 55px; } .t-browse { width: 53px; } .t-find { width: 55px; } .t-set { width: 97px; margin-right: 3px; }
.t-def { width: 87px; background: #df850f; margin-right: 4px; } .t-sim { width: 78px; } .t-play { width: 55px; }
.dd { width: 8px; height: 5px; margin: 28px 9px 0 10px; color: #bbb; align-self: flex-start; }
.debug { display: flex; flex-direction: column; align-items: center; gap: 1px; padding-top: 8px; }
select { appearance: none; width: 105px; height: 20px; padding-left: 5px; border: 1px solid #e8e8e8; border-radius: 1px; color: #111; background: url("data:image/svg+xml,%3Csvg xmlns='http://www.w3.org/2000/svg' viewBox='0 0 8 5'%3E%3Cpath d='M0 0h8L4 5z'/%3E%3C/svg%3E") right 7px center/8px 5px no-repeat, linear-gradient(#d8d8d8, #a8a8a8); }
.debug select { width: 159px; height: 22px; padding-left: 5px; background-color: #ddd; background-position: right 6px center, 0 0; background-image: url("data:image/svg+xml,%3Csvg xmlns='http://www.w3.org/2000/svg' viewBox='0 0 8 5'%3E%3Cpath d='M0 0h8L4 5z'/%3E%3C/svg%3E"); }

/* Graph */
.graph { position: relative; flex: 1; min-height: 0; overflow: hidden; border: 2px solid #606060; background: #262626; }
.world { position: absolute; left: -271px; top: -141px; }
.layer { position: absolute; left: 0; top: 0; width: 1920px; height: 1080px; }
.comment { position: absolute; border: 2px solid rgba(100, 100, 100, .8); background: rgba(160, 160, 160, .55); }
.comment h3 { height: 24px; padding-left: 6px; background: #a7a7a7; color: #e8e8e8; font-size: 16px; line-height: 26px; text-shadow: 1px 1px 1px #111; }
.c1 { left: 850px; top: 186px; width: 626px; height: 356px; }
.c2 { left: 853px; top: 545px; width: 550px; height: 400px; }
.node { position: absolute; border-radius: 4px; background: linear-gradient(rgba(12, 14, 12, .92), rgba(24, 28, 24, .92)); box-shadow: 0 0 0 1px #0c0c0c, 0 2px 4px rgba(0, 0, 0, .7); color: #e6e6e6; font-size: 8px; line-height: 10px; overflow: hidden; }
.node h4 { display: grid; grid-template-columns: 10px auto; column-gap: 4px; align-items: center; justify-content: start; height: 15px; padding-left: 6px; color: #ececec; font-size: 9px; line-height: 11px; white-space: nowrap; box-shadow: inset 0 1px rgba(255, 255, 255, .35); text-shadow: 1px 1px 1px #000; }
.node h4 svg { width: 10px; height: 10px; }
.node h4 em { grid-column: 2; color: #9aa080; font-weight: 400; font-size: 8px; line-height: 10px; text-shadow: none; }
.node.two h4 { height: 26px; padding-top: 3px; align-content: start; }
.blue h4 { background: radial-gradient(ellipse at 50% 60%, rgba(20, 40, 55, .7), transparent 60%), linear-gradient(90deg, #4a82a8, #3f6a87 60%, #2c3a44); }
.yellow h4 { background: linear-gradient(100deg, #8e9018, #7d7e1c 50%, #3c3d30 75%, #383838); }
.gray h4 { background: linear-gradient(100deg, #959595, #5c5c5c 50%, #2e2e2e); }
.red h4 { background: linear-gradient(100deg, #a01c20, #8c1418 50%, #3c1618); position: relative; }
.fb { color: #6cc0f8; }
.del { position: absolute; right: 1px; top: 10px; }
.collapsed { background: radial-gradient(ellipse at 50% 60%, #565656, transparent 45%), linear-gradient(#2b2b2b, #101210); }
.node.collapsed h4 { display: block; height: 26px; padding-top: 2px; box-shadow: none; }
.node.collapsed h4 em { display: block; }
.row { display: flex; align-items: center; justify-content: space-between; height: 20px; padding: 0 7px 0 7px; white-space: nowrap; }
.row.ex { height: 19px; margin-top: 2px; }
.row.s { height: 17px; }
.row.last { margin-top: 4px; }
.row.mini { height: 12px; margin-top: -4px; }
.collapsed .row.ex { margin-top: 1px; }
.two .row.ex { margin-bottom: -1px; }
.row > span, .row > label { display: flex; align-items: center; gap: 4px; }
.shift { padding-left: 14px; }
.e { width: 9px; height: 10px; } .d { width: 10px; height: 8px; }
.sd { display: inline-block; width: 5px; height: 4px; }
.tag { padding: 0 2px; background: #2a2a2a; color: #999; }
.dim { color: #444; }
.node kbd { display: inline-block; height: 11px; padding: 0 2px; border: 1px solid #bbb; font: 8px/9px Roboto, sans-serif; }
.cblue { color: #0a5ad8; } .cgreen { color: #25dca4; } .cgreen2 { color: #1dae82; } .csky { color: #0aa0ff; } .cring { color: #0a7cc4; }
.cred { color: #960000; } .cred2 { color: #780000; } .cpurple { color: #5a00b8; } .cpink { color: #e010d0; } .corange { color: #ff8000; }
.pill { position: absolute; display: flex; align-items: center; justify-content: flex-end; padding-right: 8px; border-radius: 9px; border: 1px solid #222; border-top-color: #777; background: radial-gradient(ellipse at 50% 10%, rgba(40, 80, 150, .9), transparent 60%), #222; font-size: 8px; box-shadow: 0 2px 3px #000; }
.pill span { display: flex; align-items: center; gap: 4px; }
.pill.orange { background: radial-gradient(ellipse at 50% 10%, rgba(190, 95, 30, .8), transparent 60%), rgba(50, 48, 46, .9); }
.n-out { left: 378px; top: 200px; width: 71px; height: 18px; }
.n-in { left: 378px; top: 222px; width: 65px; height: 37px; }
.n-qi { left: 454px; top: 254px; width: 87px; height: 20px; }
.n-utg { left: 551px; top: 222px; width: 110px; height: 54px; }
.n-sw { left: 670px; top: 222px; width: 120px; height: 75px; }
.n-ol1 { left: 864px; top: 222px; width: 106px; height: 37px; }
.n-c5 { left: 983px; top: 211px; width: 88px; height: 47px; }
.n-gaa { left: 1091px; top: 222px; width: 161px; height: 67px; }
.n-bind { left: 1264px; top: 222px; width: 113px; height: 71px; }
.n-take { left: 940px; top: 297px; width: 91px; height: 48px; }
.n-chk { left: 1037px; top: 297px; width: 144px; height: 147px; }
.n-br { left: 1188px; top: 308px; width: 116px; height: 56px; }
.n-inv { left: 940px; top: 399px; width: 87px; height: 45px; }
.n-next { left: 1318px; top: 297px; width: 135px; height: 152px; }
.n-upd { left: 1318px; top: 459px; width: 135px; height: 68px; }
.n-ol2 { left: 866px; top: 574px; width: 105px; height: 37px; }
.n-one { left: 887px; top: 606px; width: 88px; height: 21px; }
.n-ath { left: 985px; top: 574px; width: 123px; height: 91px; }
.n-trg { left: 866px; top: 671px; width: 90px; height: 47px; }
.n-des { left: 995px; top: 682px; width: 101px; height: 57px; }
.n-sti { left: 1113px; top: 671px; width: 134px; height: 240px; }
.n-ns { left: 1264px; top: 671px; width: 135px; height: 109px; }
.tall .row:not(.ex) { height: 21px; }
.node.tall .row.ex { margin-top: 1px; margin-bottom: -2px; }
.node input { appearance: none; width: 10px; height: 10px; border: 1px solid #ddd; border-radius: 2px; }
.vignette { position: absolute; inset: 0; box-shadow: inset 0 0 30px 6px rgba(0, 0, 0, .45); }
.crumbs { position: relative; display: flex; align-items: center; height: 42px; padding-right: 3px; background: rgba(10, 10, 10, .8); color: #888; font-size: 19px; line-height: 24px; white-space: nowrap; }
.star { width: 20px; height: 20px; margin: 0 6px; }
.bar { width: 1px; height: 36px; background: #666; }
.nav { width: 18px; height: 18px; margin-left: 12px; color: #e4f0f4; }
.nav.fwd { margin-left: 24px; color: #888; transform: scaleX(-1); }
.b2 { margin: 0 12px 0 14px; }
.gi { width: 24px; height: 22px; margin-right: 14px; }
.chev { width: 8px; height: 14px; margin: 0 10px; }
.chev.far { margin: 0 19px 0 26px; }
.zoom { margin-left: auto; color: #343434; font-size: 18px; }
.mark { position: absolute; right: 11px; bottom: 15px; color: rgba(190, 190, 190, .28); font-size: 56px; line-height: 64px; font-weight: 700; }

/* Output */
.out-tabs { margin-top: 6px; }
.output { display: flex; flex-direction: column; flex: none; height: 160px; padding: 4px; }
.log { flex: 1; background: #222; border-radius: 2px; }
.foot { display: flex; align-items: center; justify-content: flex-end; height: 32px; padding: 1px 6px 0 0; color: #777; }

/* Details */
.details { display: flex; flex-direction: column; flex: 1; min-height: 0; padding: 2px 0 2px 2px; border-radius: 3px; background: #606060; }
.dt-tools { display: flex; align-items: center; flex: none; height: 26px; padding: 0 5px 0 2px; gap: 3px; }
.dt-tools .search { margin-right: 5px; }
.dt-tools .eye { margin-left: 1px; }
.dt-tools .dn { color: #bbb; }
.matrix { display: flex; align-items: center; justify-content: center; width: 27px; height: 24px; border: 1px solid #eee; border-radius: 2px; background: linear-gradient(#999, #ccc); }
.matrix svg { width: 14px; height: 14px; }
.list { position: relative; flex: 1; min-height: 0; overflow: hidden; padding-right: 1px; }
.cat { display: flex; align-items: center; width: 100%; height: 22px; margin-bottom: 2px; padding-left: 4px; gap: 2px; border-radius: 3px; background: #303030; font-weight: 700; text-shadow: 1px 1px #000; }
.cat.open { margin: 0; border-radius: 3px 3px 0 0; }
.props { padding-bottom: 13px; margin-bottom: 2px; border-radius: 0 0 3px 3px; background: linear-gradient(#222, #222) 160px 0/1px 100% no-repeat #3e3e3e; color: #c4c4c4; }
.pr { display: flex; height: 24px; }
.h25 { height: 25px; } .h26 { height: 26px; } .h28 { height: 28px; } .h78 { height: 78px; }
.k { display: flex; align-items: center; flex: none; width: 164px; gap: 4px; white-space: nowrap; }
.k0 { padding-left: 4px; } .k1 { padding-left: 26px; } .k1a { padding-left: 14px; } .k2g { padding-left: 15px; gap: 3px; } .k3 { padding-left: 46px; } .k3a { padding-left: 34px; } .k4g { padding-left: 35px; gap: 3px; } .k5 { padding-left: 65px; }
.grip { width: 5px; height: 13px; }
.v { display: flex; align-items: center; flex: 1; gap: 10px; }
.v .dn { color: #bbb; margin: 0 0 0 -4px; }
.in8 { padding-left: 8px; }
.arr { width: 102px; white-space: nowrap; }
.mem { width: 94px; }
.v .mem + .dn { margin-left: -3px; }
.arr ~ svg { margin-right: 2px; color: #ddd; }
.arr ~ .rs { margin-left: -2px; }
.v input[type=checkbox] { appearance: none; width: 14px; height: 14px; margin-left: 1px; margin-right: -2px; border-radius: 2px; background: #ababab; }
.v input[type=checkbox]:checked { background: #dcdcdc; }
input[type=checkbox]:checked::after { content: ""; display: block; width: 5px; height: 9px; margin: 1px 0 0 5px; border: solid #555; border-width: 0 3px 3px 0; transform: rotate(42deg); }
.node input[type=checkbox]:checked::after { width: 4px; height: 7px; margin: 0 0 0 2px; border-color: #fff; border-width: 0 2px 2px 0; }
.v input[type=text] { height: 19px; padding: 0 1px 0 4px; border-radius: 3px; background: #d8d8d8; color: #111; outline: 0; }
.v input.num[type=text] { width: 105px; height: 17px; margin-right: -2px; background: url("data:image/svg+xml,%3Csvg xmlns='http://www.w3.org/2000/svg' viewBox='0 0 8 8'%3E%3Cpath d='M3 0h5v5zM0 3v5h5z'/%3E%3C/svg%3E") right 6px center/8px 8px no-repeat #d8d8d8; }
.w92 { width: 92px; } .w141 { width: 141px; } .w89 { width: 89px; }
.w141 + .dn + .rs { margin-left: -4px; }
select.cut { width: 56px; padding: 0 14px 0 2px; background-position: right 4px center, 0 0; text-overflow: clip; }
.acts { display: flex; align-items: center; gap: 11px; margin-left: 1px; color: #ddd; }
.thumb { width: 64px; height: 64px; margin-left: 5px; box-shadow: 0 0 2px 1px #111; }
.asset { display: flex; flex-direction: column; gap: 5px; margin-left: -3px; color: #ddd; }
.asset span { display: flex; gap: 11px; padding-left: 6px; }
select.dark { width: 93px; height: 19px; padding-left: 2px; border: 0; border-radius: 3px; color: #ddd; background: url("data:image/svg+xml,%3Csvg xmlns='http://www.w3.org/2000/svg' viewBox='0 0 8 5'%3E%3Cpath fill='%23ccc' d='M0 0h8L4 5z'/%3E%3C/svg%3E") right 4px center/8px 5px no-repeat #585858; }
.scroll { position: absolute; right: 4px; top: 1px; width: 10px; height: 900px; border-radius: 2px; background: #fff; }

/* Annotations drawn over the editor */
.notes { position: absolute; left: 0; top: 0; width: 100%; height: 100%; pointer-events: none; overflow: hidden; }
.hand { fill: #00caff; font-family: Lato, sans-serif; }
.t-a { font-size: 88px; } .t-b { font-size: 59px; } .t-c { font-size: 58px; } .t-d { font-size: 88px; }
```
